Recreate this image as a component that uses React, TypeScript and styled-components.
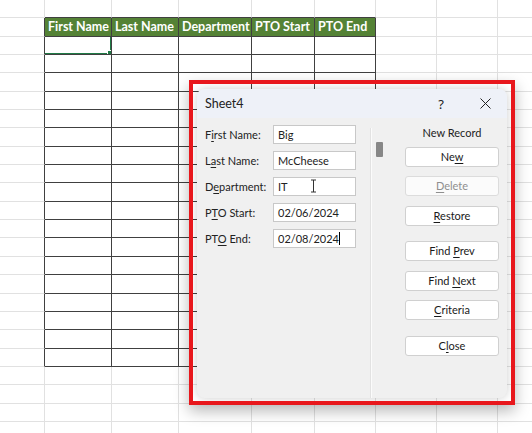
import styled, { createGlobalStyle } from 'styled-components';

const GlobalStyle = createGlobalStyle`
  html, body {
    margin: 0;
    padding: 0;
    background: #ffffff;
    overflow: hidden;
  }
  body {
    font-family: Lato, "Noto Sans", sans-serif;
  }
`;

const COLUMNS = [45, 67, 67, 73, 63, 61, 61, 61, 61];
const ROW_COUNT = 24;
const ROW_HEIGHT = 18.35;
const HEADERS = ['First Name', 'Last Name', 'Department', 'PTO Start', 'PTO End'];
const LAST_TABLE_ROW = 19;

const FIELDS = [
  { before: 'F', key: 'i', after: 'rst Name:', value: 'Big' },
  { before: 'L', key: 'a', after: 'st Name:', value: 'McCheese' },
  { before: 'D', key: 'e', after: 'partment:', value: 'IT', pointer: true },
  { before: 'P', key: 'T', after: 'O Start:', value: '02/06/2024' },
  { before: 'PT', key: 'O', after: ' End:', value: '02/08/2024', caret: true },
];

const BUTTONS = [
  { before: 'Ne', key: 'w', after: '', gap: 0 },
  { before: '', key: 'D', after: 'elete', gap: 9, disabled: true },
  { before: '', key: 'R', after: 'estore', gap: 10 },
  { before: 'Find ', key: 'P', after: 'rev', gap: 15 },
  { before: 'Find ', key: 'N', after: 'ext', gap: 10 },
  { before: '', key: 'C', after: 'riteria', gap: 9 },
  { before: 'C', key: 'l', after: 'ose', gap: 16 },
];

const GRID_LIGHT = '#e1e1e1';
const GRID_DARK = '#404040';

const Sheet = styled.div`
  display: grid;
  grid-template-columns: ${COLUMNS.map((w) => `${w}px`).join(' ')};
  grid-auto-rows: ${ROW_HEIGHT}px;
  width: 532px;
  height: 433px;
  overflow: hidden;
  position: relative;
`;

const Cell = styled.div<{ $right: boolean; $bottom: boolean; $header?: boolean }>`
  position: relative;
  box-sizing: border-box;
  border-right: 1px solid ${(p) => (p.$right ? GRID_DARK : GRID_LIGHT)};
  border-bottom: 1px solid ${(p) => (p.$bottom ? GRID_DARK : GRID_LIGHT)};
  background: ${(p) => (p.$header ? '#548235' : '#ffffff')};
  color: #ffffff;
  font-family: Lato, "Liberation Sans", sans-serif;
  font-weight: 700;
  font-size: 12.5px;
  line-height: 18px;
  padding-left: 3px;
  white-space: nowrap;
  overflow: hidden;
`;

const Selection = styled.div`
  position: absolute;
  inset: -1px 0 0 -1px;
  border: 1.5px solid #1f7a45;
  pointer-events: none;

  &::after {
    content: '';
    position: absolute;
    right: -3px;
    bottom: -3px;
    width: 4px;
    height: 4px;
    background: #1f7a45;
    border: 1px solid #ffffff;
  }
`;

const Highlight = styled.div`
  position: absolute;
  left: 189px;
  top: 80px;
  width: 326px;
  height: 325px;
  box-sizing: border-box;
  border: 4.5px solid #e8171c;
  box-shadow: 0 6px 14px rgba(0, 0, 0, 0.28);
  pointer-events: none;
`;

const Dialog = styled.div`
  position: absolute;
  left: 197px;
  top: 89px;
  width: 310px;
  height: 309px;
  border-radius: 8px;
  overflow: hidden;
  background: #f0f0f0;
  box-shadow: 0 0 10px rgba(0, 0, 0, 0.2);
  display: flex;
  flex-direction: column;
  color: #222222;
`;

const TitleBar = styled.div`
  height: 29px;
  flex-shrink: 0;
  background: #eef1f8;
  display: flex;
  align-items: center;
  padding-left: 8px;
  font-size: 12.5px;
`;

const Title = styled.span`
  flex: 1;
`;

const TitleButton = styled.span`
  width: 44px;
  display: flex;
  justify-content: center;
  align-items: center;
  font-family: "Noto Sans", sans-serif;
  font-size: 13px;
`;

const Body = styled.div`
  flex: 1;
  display: flex;
`;

const FieldPane = styled.div`
  width: 165px;
  padding: 7px 0 0 8px;
  display: flex;
  flex-direction: column;
  gap: 7px;
`;

const FieldRow = styled.div`
  display: flex;
  align-items: center;
  height: 19px;
`;

const Label = styled.span`
  width: 68px;
  font-size: 11px;
  white-space: nowrap;
`;

const Key = styled.span`
  text-decoration: underline;
  text-underline-offset: 2px;
  text-decoration-thickness: 1px;
`;

const Input = styled.div`
  position: relative;
  width: 83px;
  height: 19px;
  box-sizing: border-box;
  border: 1px solid #c8c8c8;
  background: #ffffff;
  font-size: 11px;
  line-height: 17px;
  padding-left: 4px;
  white-space: nowrap;
`;

const Caret = styled.span`
  display: inline-block;
  width: 1px;
  height: 13px;
  background: #000000;
  vertical-align: -2px;
`;

const PointerGlyph = styled.svg`
  position: absolute;
  left: 36px;
  top: 1px;
`;

const Divider = styled.div`
  width: 1px;
  margin-top: 10px;
  background: #e2e2e2;
  border-right: 1px solid #fbfbfb;
`;

const ScrollTrack = styled.div`
  width: 7px;
  margin-left: 4px;
  padding-top: 24px;
`;

const Thumb = styled.div`
  width: 7px;
  height: 15px;
  background: #878787;
  border-radius: 1px;
`;

const ButtonPane = styled.div`
  margin-left: 22px;
  width: 94px;
  display: flex;
  flex-direction: column;
  padding-top: 8px;
`;

const RecordLabel = styled.div`
  height: 21px;
  text-align: center;
  font-size: 11px;
  line-height: 14px;
`;

const FormButton = styled.div<{ $gap: number; $disabled?: boolean }>`
  margin-top: ${(p) => p.$gap}px;
  height: 20px;
  box-sizing: border-box;
  border: 1px solid ${(p) => (p.$disabled ? '#dcdcdc' : '#d0d0d0')};
  border-radius: 3px;
  background: ${(p) => (p.$disabled ? '#fbfbfb' : '#ffffff')};
  color: ${(p) => (p.$disabled ? '#8f8f8f' : '#1a1a1a')};
  font-size: 11px;
  line-height: 18px;
  text-align: center;
`;

export default function App() {
  const cells = [];
  for (let r = 0; r < ROW_COUNT; r++) {
    for (let c = 0; c < COLUMNS.length; c++) {
      const inTableRows = r >= 1 && r <= LAST_TABLE_ROW;
      const right = inTableRows && c <= 5;
      const bottom = c >= 1 && c <= 5 && r <= LAST_TABLE_ROW;
      const header = r === 1 && c >= 1 && c <= 5;
      cells.push(
        <Cell key={`${r}-${c}`} $right={right} $bottom={bottom} $header={header}>
          {header ? HEADERS[c - 1] : null}
          {r === 2 && c === 1 ? <Selection /> : null}
        </Cell>
      );
    }
  }

  return (
    <>
      <GlobalStyle />
      <Sheet>
        {cells}
        <Dialog>
          <TitleBar>
            <Title>Sheet4</Title>
            <TitleButton>?</TitleButton>
            <TitleButton>
              <svg width="11" height="11" viewBox="0 0 11 11">
                <path d="M0.5 0.5 L10.5 10.5 M10.5 0.5 L0.5 10.5" stroke="#222" strokeWidth="1" />
              </svg>
            </TitleButton>
          </TitleBar>
          <Body>
            <FieldPane>
              {FIELDS.map((f) => (
                <FieldRow key={f.after}>
                  <Label>
                    {f.before}
                    <Key>{f.key}</Key>
                    {f.after}
                  </Label>
                  <Input>
                    {f.value}
                    {f.caret ? <Caret /> : null}
                    {f.pointer ? (
                      <PointerGlyph width="7" height="14" viewBox="0 0 7 14">
                        <path d="M1 1 H6 M3.5 1 V13 M1 13 H6" stroke="#333" strokeWidth="1" fill="none" />
                      </PointerGlyph>
                    ) : null}
                  </Input>
                </FieldRow>
              ))}
            </FieldPane>
            <Divider />
            <ScrollTrack>
              <Thumb />
            </ScrollTrack>
            <ButtonPane>
              <RecordLabel>New Record</RecordLabel>
              {BUTTONS.map((b) => (
                <FormButton key={b.before + b.key + b.after} $gap={b.gap} $disabled={b.disabled}>
                  {b.before}
                  <Key>{b.key}</Key>
                  {b.after}
                </FormButton>
              ))}
            </ButtonPane>
          </Body>
        </Dialog>
        <Highlight />
      </Sheet>
    </>
  );
}
